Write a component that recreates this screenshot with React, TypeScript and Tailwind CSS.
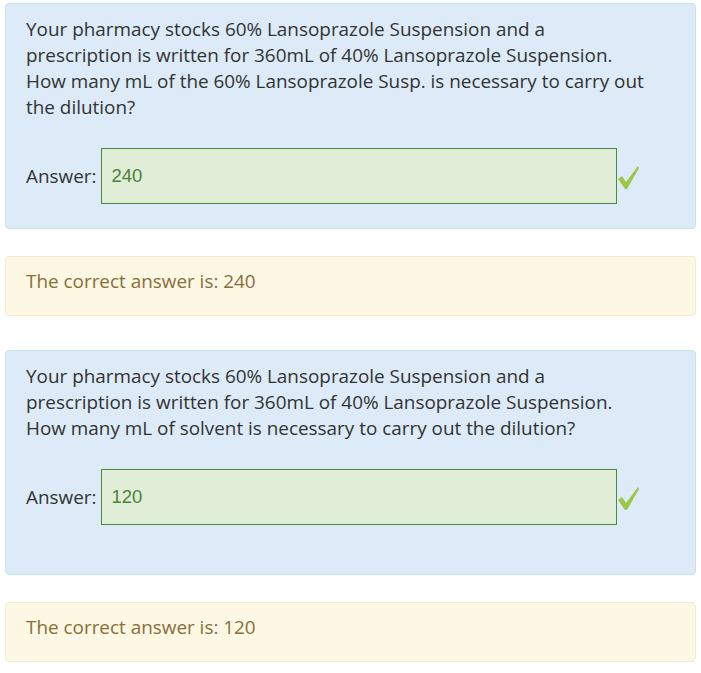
import React from "react";

function Check() {
  return (
    <svg width="22" height="24" viewBox="0 0 22 24" className="ml-[1px] mt-[4px]">
      <path d="M0 13 L4 10 L8 16 L20 0 L21 2 L9 23 L7 23 Z" fill="#9bc747" />
    </svg>
  );
}

function Question({ lines, answer, bottomPad }: { lines: string[]; answer: string; bottomPad: string }) {
  return (
    <div className={`mx-[5px] rounded-[4px] border border-[#c6e4ef] bg-[#dcebf7] pl-[20px] pr-[20px] pt-[12px] ${bottomPad}`}>
      <div className="text-[18.9px] leading-[26px] text-[#333333]">
        {lines.map((l, i) => (
          <div key={i}>{l}</div>
        ))}
      </div>
      <div className="mt-[28px] flex items-center">
        <span className="text-[18.9px] leading-[26px] text-[#333333]">Answer:</span>
        <div className="ml-[5px] flex h-[56px] w-[516px] items-center border border-[#4f8a3c] bg-[#e0eed8] pl-[9px] font-['Liberation_Sans',Arial,sans-serif] text-[18.5px] text-[#4f7f3a]">
          {answer}
        </div>
        <Check />
      </div>
    </div>
  );
}

function Feedback({ text }: { text: string }) {
  return (
    <div className="mx-[5px] h-[60px] rounded-[4px] border border-[#f7ebcf] bg-[#fcf8e4] pl-[20px] pt-[11px] text-[18.9px] leading-[26px] text-[#8a6d3b]">
      {text}
    </div>
  );
}

export default function App() {
  return (
    <div className="min-h-[673px] w-[701px] bg-white pt-[3px] font-['Open_Sans',sans-serif]">
      <Question
        lines={[
          "Your pharmacy stocks 60% Lansoprazole Suspension and a",
          "prescription is written for 360mL of 40% Lansoprazole Suspension.",
          "How many mL of the 60% Lansoprazole Susp. is necessary to carry out",
          "the dilution?",
        ]}
        answer="240"
        bottomPad="pb-[24px]"
      />
      <div className="mt-[27px]">
        <Feedback text="The correct answer is: 240" />
      </div>
      <div className="mt-[34px]">
        <Question
          lines={[
            "Your pharmacy stocks 60% Lansoprazole Suspension and a",
            "prescription is written for 360mL of 40% Lansoprazole Suspension.",
            "How many mL of solvent is necessary to carry out the dilution?",
          ]}
          answer="120"
          bottomPad="pb-[49px]"
        />
      </div>
      <div className="mt-[27px]">
        <Feedback text="The correct answer is: 120" />
      </div>
    </div>
  );
}
